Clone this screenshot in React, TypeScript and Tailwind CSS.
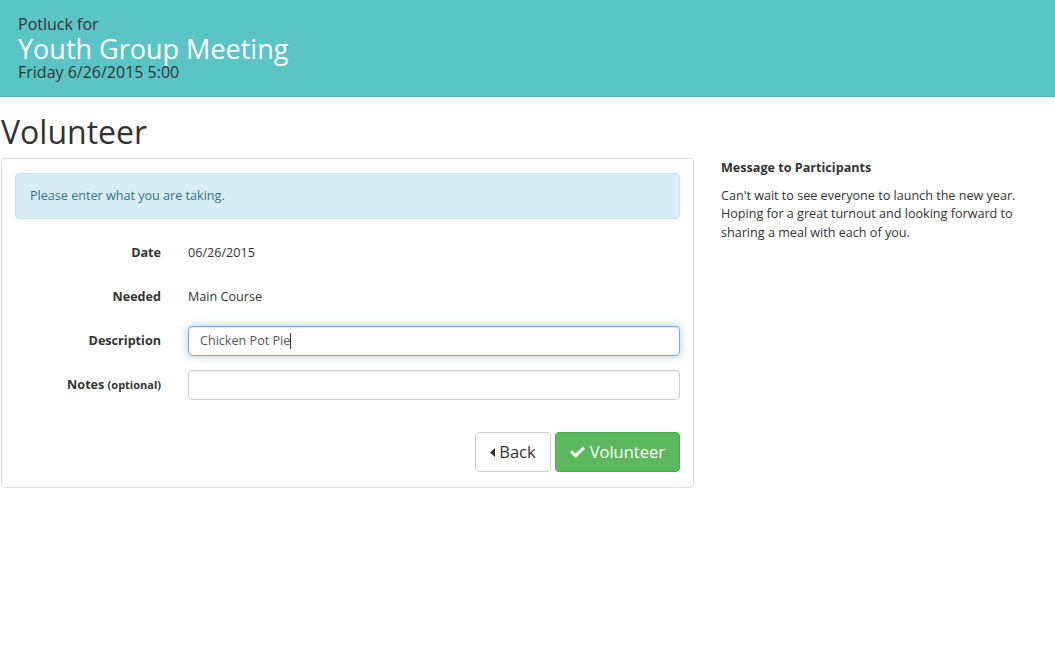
import React from 'react';

const App: React.FC = () => {
  return (
    <div className="min-h-[649px] bg-white font-['Open_Sans',sans-serif] text-[#333]">
      {/* Header */}
      <header className="h-[97px] bg-[#5bc5c5] border-b border-[#4fb8b8] px-[18px] pt-[15px]">
        <div className="text-[16px] leading-[18px] text-[#333]">Potluck for</div>
        <div className="mt-[2px] text-[27px] leading-[28px] text-white">Youth Group Meeting</div>
        <div className="mt-[1px] text-[16px] leading-[16px] text-[#333]">Friday 6/26/2015 5:00</div>
      </header>

      <h1 className="text-[32px] leading-[40px] mt-[15px] mb-[6px] pl-[1px]">Volunteer</h1>

      <div className="flex items-start pl-[1px] text-[12.6px]">
        {/* Form panel */}
        <div className="w-[693px] border border-[#ddd] rounded-[4px] px-[13px] pt-[14px] pb-[15px]">
          <div className="h-[46px] flex items-center px-[14px] bg-[#d9edf7] border border-[#bce8f1] rounded-[4px] text-[#31708f]">
            Please enter what you are taking.
          </div>

          <div className="mt-[19px]">
            <div className="flex items-center h-[30px]">
              <div className="w-[146px] text-right font-bold">Date</div>
              <div className="pl-[27px]">06/26/2015</div>
            </div>
            <div className="flex items-center h-[30px] mt-[14px]">
              <div className="w-[146px] text-right font-bold">Needed</div>
              <div className="pl-[27px]">Main Course</div>
            </div>
            <div className="flex items-center h-[30px] mt-[14px]">
              <div className="w-[146px] text-right font-bold">Description</div>
              <div className="pl-[27px] flex-1">
                <div className="h-[30px] flex items-center px-[11px] border border-[#66afe9] rounded-[4px] shadow-[inset_0_1px_1px_rgba(0,0,0,0.075),0_0_8px_rgba(102,175,233,0.6)] text-[#555]">
                  Chicken Pot Pie<span className="inline-block w-px h-[16px] bg-[#333]"></span>
                </div>
              </div>
            </div>
            <div className="flex items-center h-[30px] mt-[14px]">
              <div className="w-[146px] text-right font-bold">
                Notes <span className="text-[11px]">(optional)</span>
              </div>
              <div className="pl-[27px] flex-1">
                <div className="h-[30px] border border-[#ccc] rounded-[4px] shadow-[inset_0_1px_1px_rgba(0,0,0,0.075)]"></div>
              </div>
            </div>
          </div>

          <div className="flex justify-end gap-[4px] mt-[32px]">
            <button className="h-[40px] px-[14px] flex items-center gap-[4px] border border-[#ccc] rounded-[4px] bg-white text-[16.5px] text-[#333]">
              <svg width="5" height="9" viewBox="0 0 5 9" fill="currentColor">
                <path d="M5 0L0 4.5L5 9Z" />
              </svg>
              Back
            </button>
            <button className="h-[40px] px-[14px] flex items-center gap-[5px] border border-[#4cae4c] rounded-[4px] bg-[#5cb85c] text-[16.5px] text-white">
              <svg width="15" height="12" viewBox="0 0 15 12" fill="currentColor">
                <path d="M0 6.5L2.2 4.3L5.6 7.7L12.8 0.5L15 2.7L5.6 12Z" />
              </svg>
              Volunteer
            </button>
          </div>
        </div>

        {/* Side message */}
        <div className="ml-[27px] w-[310px] leading-[18.5px] pt-[1px]">
          <div className="font-bold">Message to Participants</div>
          <p className="mt-[9px]">
            Can't wait to see everyone to launch the new year. Hoping for a great turnout and looking forward to
            sharing a meal with each of you.
          </p>
        </div>
      </div>
    </div>
  );
};

export default App;
